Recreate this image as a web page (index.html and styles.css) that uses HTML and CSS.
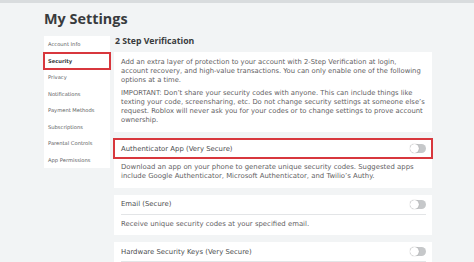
FILE: index.html
```html
<!DOCTYPE html>
<html lang="en">
<head>
	<meta charset="UTF-8">
	<title>My Settings</title>
	<link rel="stylesheet" href="styles.css">
</head>
<body>
<div class="topbar"></div>
<div class="page">
	<h1 class="page-title">My Settings</h1>
	<div class="layout">
		<nav class="side-menu">
			<a class="menu-item">Account Info</a>
			<a class="menu-item active marked">Security</a>
			<a class="menu-item">Privacy</a>
			<a class="menu-item">Notifications</a>
			<a class="menu-item">Payment Methods</a>
			<a class="menu-item">Subscriptions</a>
			<a class="menu-item">Parental Controls</a>
			<a class="menu-item">App Permissions</a>
		</nav>

		<main class="content">
			<h2 class="section-title">2 Step Verification</h2>
			<div class="card intro">
				<p>Add an extra layer of protection to your account with 2-Step Verification at login, account recovery, and high-value transactions. You can only enable one of the following options at a time.</p>
				<p>IMPORTANT: Don’t share your security codes with anyone. This can include things like texting your code, screensharing, etc. Do not change security settings at someone else’s request. Roblox will never ask you for your codes or to change settings to prove account ownership.</p>
			</div>

			<div class="card option">
				<div class="option-head marked">
					<span>Authenticator App (Very Secure)</span>
					<span class="toggle"></span>
				</div>
				<p class="option-desc">Download an app on your phone to generate unique security codes. Suggested apps include Google Authenticator, Microsoft Authenticator, and Twilio’s Authy.</p>
			</div>

			<div class="card option">
				<div class="option-head">
					<span>Email (Secure)</span>
					<span class="toggle"></span>
				</div>
				<p class="option-desc">Receive unique security codes at your specified email.</p>
			</div>

			<div class="card option">
				<div class="option-head">
					<span>Hardware Security Keys (Very Secure)</span>
					<span class="toggle"></span>
				</div>
			</div>
		</main>
	</div>
</div>
</body>
</html>
```

FILE: styles.css
```css
html, body{
	height: 100%;
}
body{
	margin: 0;
	overflow: hidden;
	background: #f2f4f5;
	color: #5f6163;
	font-family: "DejaVu Sans", "Open Sans", sans-serif;
}
.topbar{
	height: 3px;
	background: #d9dcde;
}
.page{
	padding-left: 44px;
}
.page-title{
	margin: 6px 0 7px;
	font-family: "Open Sans", sans-serif;
	font-size: 14.4px;
	line-height: 20px;
	font-weight: 700;
	color: #393b3d;
}
.layout{
	display: flex;
	align-items: flex-start;
	gap: 4px;
}

/* left menu */
.side-menu{
	width: 66px;
	display: flex;
	flex-direction: column;
	background: #fff;
}
.menu-item{
	height: 16.5px;
	display: flex;
	align-items: center;
	padding-left: 4px;
	font-size: 5.2px;
	color: #606264;
}
.menu-item.active{
	font-weight: 700;
	color: #393b3d;
}
.marked{
	outline: 2px solid #d8373d;
	outline-offset: -1px;
}

/* right column */
.content{
	width: 318px;
}
.section-title{
	margin: 0 0 6px 1px;
	font-family: "Open Sans", sans-serif;
	font-size: 8.7px;
	line-height: 10px;
	font-weight: 700;
	color: #393b3d;
}
.card{
	background: #fff;
	margin-bottom: 7px;
}
.intro{
	padding: 5.5px 7px 7px;
}
.intro p{
	margin: 0;
	font-size: 6.8px;
	line-height: 9px;
}
.intro p + p{
	margin-top: 4.6px;
}
.option-head{
	height: 19px;
	display: flex;
	align-items: center;
	justify-content: space-between;
	margin: 0 6px 0 7px;
	font-size: 6.9px;
	color: #4a4c4e;
	border-bottom: 1px solid #e3e5e7;
}
.option-head.marked{
	margin: 0;
	padding: 0 6px 0 7px;
	border-bottom: none;
}
.option-desc{
	margin: 0;
	padding: 5px 7px 6.5px;
	font-size: 6.9px;
	line-height: 9px;
}
.toggle{
	position: relative;
	width: 16px;
	height: 9px;
	border-radius: 5px;
	background: #c6c8ca;
}
.toggle::after{
	content: "";
	position: absolute;
	left: 0;
	top: 0;
	width: 9px;
	height: 9px;
	border-radius: 50%;
	background: #fff;
	box-shadow: 0 0 1px rgba(0, 0, 0, 0.45);
}
```
